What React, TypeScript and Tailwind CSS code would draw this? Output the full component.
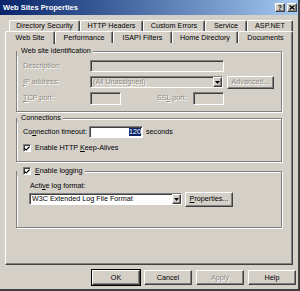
import type { ReactNode } from 'react'

const raised =
  'border border-t-white border-l-white border-r-[#404040] border-b-[#404040] shadow-[inset_-1px_-1px_0_#808080]'
const sunken =
  'border border-t-[#808080] border-l-[#808080] border-r-white border-b-white shadow-[inset_1px_1px_0_#404040]'
const dimText = 'text-[#8d8a83] [text-shadow:1px_1px_0_#fff]'

function U({ children }: { children: ReactNode }) {
  return <span className="underline underline-offset-1">{children}</span>
}

function Group({ legend, children, className = '' }: { legend: ReactNode; children: ReactNode; className?: string }) {
  return (
    <fieldset
      className={`mx-[10px] border border-[#808080] shadow-[inset_1px_1px_0_#fff,1px_1px_0_#fff] ${className}`}
    >
      <legend className="h-[10px] leading-[10px] bg-[#d4d0c8]">{legend}</legend>
      {children}
    </fieldset>
  )
}

function Check({ label }: { label: ReactNode }) {
  return (
    <span className="flex items-center gap-[4px]">
      <span className={`w-[8px] h-[8px] bg-white ${sunken} flex items-center justify-center`}>
        <svg width="6" height="6" viewBox="0 0 7 7">
          <path d="M0.5 3 L2.5 5 L6.5 1 L6.5 2.8 L2.5 6.6 L0.5 4.7 Z" fill="#000" />
        </svg>
      </span>
      <span>{label}</span>
    </span>
  )
}

function DropArrow() {
  return (
    <span className={`w-[9px] h-full bg-[#d4d0c8] ${raised} flex items-center justify-center`}>
      <svg width="5" height="3" viewBox="0 0 5 3">
        <path d="M0 0 H5 L2.5 3 Z" fill="#000" />
      </svg>
    </span>
  )
}

function Button({ children, className = '', dim = false }: { children: ReactNode; className?: string; dim?: boolean }) {
  return (
    <div className={`flex items-center justify-center bg-[#d4d0c8] ${raised} ${className}`}>
      <span className={dim ? dimText : ''}>{children}</span>
    </div>
  )
}

const backTabs: [string, number][] = [
  ['Directory Security', 71],
  ['HTTP Headers', 63],
  ['Custom Errors', 62],
  ['Service', 42],
  ['ASP.NET', 46],
]

const frontTabs: [string, number][] = [
  ['Web Site', 50],
  ['Performance', 58],
  ['ISAPI Filters', 59],
  ['Home Directory', 66],
  ['Documents', 55],
]

const tabCls =
  'flex items-center justify-center rounded-t-[2px] border-t border-l border-r border-t-white border-l-white border-r-[#404040] shadow-[inset_-1px_0_0_#808080] bg-[#d4d0c8]'

export default function App() {
  return (
    <div className="w-[300px] h-[291px] bg-[#d4d0c8] flex flex-col border-r-2 border-b-2 border-r-[#404040] border-b-[#404040] font-['Liberation_Sans',Arial,sans-serif] text-[7.2px] text-black leading-none whitespace-nowrap">
      {/* title bar */}
      <div className="h-[15px] shrink-0 flex items-center bg-gradient-to-r from-[#0a246a] to-[#a6caf0] pl-[3px] pr-[1px]">
        <span className="text-white font-bold text-[7.5px]">Web Sites Properties</span>
        <div className="ml-auto flex gap-[2px]">
          <div className={`w-[10px] h-[9px] bg-[#d4d0c8] ${raised} flex items-center justify-center font-bold text-[7px]`}>?</div>
          <div className={`w-[10px] h-[9px] bg-[#d4d0c8] ${raised} flex items-center justify-center`}>
            <svg width="6" height="5" viewBox="0 0 6 5">
              <path d="M0.5 0.5 L5.5 4.5 M5.5 0.5 L0.5 4.5" stroke="#000" strokeWidth="1.3" />
            </svg>
          </div>
        </div>
      </div>

      {/* tabs */}
      <div className="shrink-0 pt-[5px]">
        <div className="flex h-[11px] pl-[9px]">
          {backTabs.map(([t, w]) => (
            <div key={t} className={tabCls} style={{ width: w }}>
              {t}
            </div>
          ))}
        </div>
        <div className="flex h-[12px] pl-[5px] -mb-px relative z-10">
          {frontTabs.map(([t, w], i) => (
            <div key={t} className={`${tabCls} ${i === 0 ? 'h-[13px]' : ''}`} style={{ width: w }}>
              {t}
            </div>
          ))}
        </div>
      </div>

      {/* panel */}
      <div className="ml-[5px] mr-[5px] h-[223px] shrink-0 border border-t-white border-l-white border-r-[#404040] border-b-[#404040] shadow-[inset_-1px_-1px_0_#808080] pt-[3px]">
        <Group legend={<span className="ml-[2px] px-[2px]">Web site identification</span>}>
          <div className="pl-[6px] pt-[2px] pb-[5px]">
            <div className="h-[16px] flex items-center">
              <span className={`w-[67px] ${dimText}`}>Description:</span>
              <div className={`w-[134px] h-[12px] ${sunken}`} />
            </div>
            <div className="h-[16px] flex items-center">
              <span className={`w-[67px] ${dimText}`}>
                <U>I</U>P address:
              </span>
              <div className={`w-[133px] h-[12px] ${sunken} flex items-center`}>
                <span className={`pl-[2px] flex-1 ${dimText}`}>(All Unassigned)</span>
                <DropArrow />
              </div>
              <Button className="ml-[4px] w-[47px] h-[13px]" dim>
                Advanced...
              </Button>
            </div>
            <div className="h-[16px] flex items-center">
              <span className={`w-[67px] ${dimText}`}>
                <U>T</U>CP port:
              </span>
              <div className={`w-[31px] h-[13px] ${sunken}`} />
              <span className={`ml-[36px] w-[36px] ${dimText}`}>
                SS<U>L</U> port:
              </span>
              <div className={`w-[31px] h-[13px] ${sunken}`} />
            </div>
          </div>
        </Group>

        <Group className="mt-[1px]" legend={<span className="ml-[2px] px-[2px]">Connections</span>}>
          <div className="pl-[6px] pt-[1px] pb-[5px]">
            <div className="h-[16px] flex items-center">
              <span className="w-[66px]">
                Co<U>n</U>nection timeout:
              </span>
              <div className={`w-[54px] h-[12px] bg-white ${sunken} flex items-center justify-end pr-[1px]`}>
                <span className="bg-[#0a246a] text-white h-[8px] flex items-center">120</span>
              </div>
              <span className="ml-[3px]">seconds</span>
            </div>
            <div className="h-[16px] flex items-center">
              <Check
                label={
                  <>
                    Enable HTTP <U>K</U>eep-Alives
                  </>
                }
              />
            </div>
          </div>
        </Group>

        <Group
          className="mt-[4px]"
          legend={
            <span className="ml-[4px] px-[2px] flex items-center h-[10px]">
              <Check
                label={
                  <>
                    <U>E</U>nable logging
                  </>
                }
              />
            </span>
          }
        >
          <div className="pl-[12px] pt-[5px] pb-[20px]">
            <div className="h-[10px] flex items-center pl-[1px]">
              Acti<U>v</U>e log format:
            </div>
            <div className="h-[16px] flex items-center">
              <div className={`w-[153px] h-[12px] bg-white ${sunken} flex items-center`}>
                <span className="pl-[2px] flex-1">W3C Extended Log File Format</span>
                <DropArrow />
              </div>
              <Button className="ml-[3px] w-[48px] h-[15px]">
                <U>P</U>roperties...
              </Button>
            </div>
          </div>
        </Group>
      </div>

      {/* dialog buttons */}
      <div className="flex pt-[5px] pl-[92px] gap-[4px]">
        <Button className="w-[48px] h-[15px] outline outline-1 outline-black">OK</Button>
        <Button className="w-[48px] h-[15px]">Cancel</Button>
        <Button className="w-[48px] h-[15px]" dim>
          Apply
        </Button>
        <Button className="w-[48px] h-[15px]">Help</Button>
      </div>
    </div>
  )
}
